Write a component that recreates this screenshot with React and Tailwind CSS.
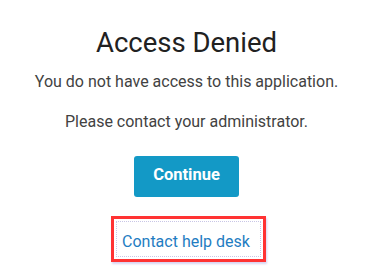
import React from 'react';

const App = () => {
  return (
    <div className="w-[368px] h-[269px] bg-white flex flex-col items-center pt-[27px] pl-[5px] font-['Roboto',sans-serif]">
      <h1 className="text-[27.5px] leading-[32px] text-[#212121]">Access Denied</h1>
      <p className="mt-[12px] text-[16px] leading-[21px] text-[#424242]">
        You do not have access to this application.
      </p>
      <p className="mt-[19px] text-[16px] leading-[21px] text-[#424242]">
        Please contact your administrator.
      </p>
      <button className="mt-[24px] w-[105px] h-[41px] pb-[2px] rounded-[3px] bg-[#1399c6] text-white text-[16.5px] font-bold">
        Continue
      </button>
      {/* highlighted help link */}
      <div className="mt-[19px] ml-[4px] w-[155px] h-[46px] border-[3px] border-[#ff3333] shadow-[1px_2px_2px_#d8d4f0] flex items-center p-[2px]">
        <div className="w-full h-full border border-dotted border-[#c9c6e6] flex items-center pl-[5px] pt-[5px]">
          <a href="#" className="text-[16px] leading-[24px] text-[#1f7dc2]">
            Contact help desk
          </a>
        </div>
      </div>
    </div>
  );
};

export default App;
